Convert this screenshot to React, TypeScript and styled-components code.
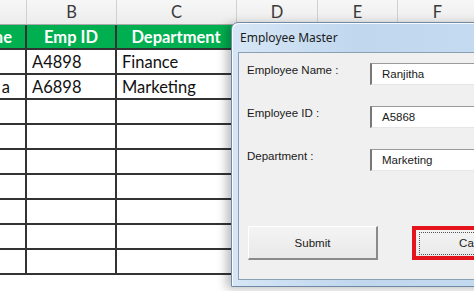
import { Fragment } from "react";
import styled, { createGlobalStyle } from "styled-components";

const GlobalStyle = createGlobalStyle`
    html, body { margin: 0; padding: 0; background: #fff; }
    body { width: 474px; height: 291px; overflow: hidden; }
`;

const Page = styled.div`
    position: relative; width: 474px; height: 291px; overflow: hidden; background: #fff;
`;

// spreadsheet behind the dialog
const Sheet = styled.div`
    display: grid;
    grid-template-columns: 27px 90px 120px 81px 80px 80px;
    grid-auto-rows: 25px;
    font-family: Lato, "Liberation Sans", sans-serif;
`;
const ColHead = styled.div`
    box-sizing: border-box; display: flex; align-items: center; justify-content: center;
    background: linear-gradient(#f7f7f7, #ececec); color: #3a3a3a; font-size: 16.5px;
    border-right: 1px solid #d0d0d0; border-bottom: 1px solid #a9a9a9;
`;
const Cell = styled.div<{ $head?: boolean; $right?: boolean; $plain?: boolean }>`
    box-sizing: border-box; display: flex; align-items: center; overflow: hidden; white-space: nowrap;
    font-size: 16.5px; padding: 0 5px; color: #111;
    border-right: ${p => p.$plain ? "1px solid #dadada" : "2px solid #333"};
    border-bottom: ${p => p.$plain ? "1px solid #dadada" : "2px solid #333"};
    ${p => p.$head && !p.$plain && `background: #00b050; color: #fff; font-weight: 700; justify-content: center;`}
    ${p => p.$right && `justify-content: flex-end; padding-right: 13px;`}
`;

// userform window
const Window = styled.div`
    position: absolute; left: 231px; top: 22px; width: 320px; height: 265px; box-sizing: border-box;
    border: 1px solid #6f8aa6; border-radius: 7px 7px 0 0;
    background: linear-gradient(90deg, #d6e6f6 0%, #c0d7ee 40%, #c6dcf2 100%);
    box-shadow: -5px 2px 10px rgba(0, 0, 0, 0.25), inset 1px 1px 0 rgba(255, 255, 255, 0.85);
    display: flex; flex-direction: column; padding: 0 6px 6px 6px;
`;
const TitleBar = styled.div`
    height: 29px; display: flex; align-items: center; padding-left: 2px;
    font-family: "Noto Sans", "Open Sans", sans-serif; font-size: 12px; color: #1b1b1b;
`;
const Client = styled.div`
    flex: 1; background: #f0f0f0; border: 1px solid #8c9fb3; border-right: 0;
    padding: 10px 0 0 8px; font-family: "Liberation Sans", Arial, sans-serif; font-size: 11.5px; color: #1a1a1a;
`;
const Form = styled.div`
    display: grid; grid-template-columns: 123px 1fr; row-gap: 21px; align-items: start;
`;
const Label = styled.div`
    line-height: 14px;
`;
const TextBox = styled.div`
    height: 22px; box-sizing: border-box; background: #fff; display: flex; align-items: center;
    padding-left: 10px; border-top: 1px solid #9a9a9a; border-left: 2px solid #777;
    border-bottom: 1px solid #e6e6e6;
`;
const ButtonRow = styled.div`
    display: flex; gap: 34px; margin-top: 55px; padding-left: 1px;
`;
const DlgButton = styled.div<{ $marked?: boolean }>`
    position: relative; width: 130px; height: 34px; box-sizing: border-box; flex: none;
    display: flex; align-items: center; justify-content: center;
    background: linear-gradient(#f4f4f4, #e9e9e9);
    border: 1px solid #fff; border-right: 2px solid #8a8a8a; border-bottom: 2px solid #8a8a8a;
    ${p => p.$marked && `
        border: 4px solid #e3141b;
        &::after {
            content: ''; position: absolute; inset: 2px 2px 1px 3px;
            border: 1px dotted #555;
        }
    `}
`;

const rows = [
    { a: "", b: "A4898", c: "Finance" },
    { a: "a", b: "A6898", c: "Marketing" },
    ...Array.from({ length: 7 }, () => ({ a: "", b: "", c: "" })),
];

export default function App() {
    return (
        <Page>
            <GlobalStyle />
            <Sheet>
                <ColHead></ColHead>
                <ColHead>B</ColHead>
                <ColHead>C</ColHead>
                <ColHead>D</ColHead>
                <ColHead>E</ColHead>
                <ColHead>F</ColHead>

                <Cell $head $right>Emp Name</Cell>
                <Cell $head>Emp ID</Cell>
                <Cell $head>Department</Cell>
                <Cell $plain />
                <Cell $plain />
                <Cell $plain />

                {rows.map((r, i) => (
                    <Fragment key={i}>
                        <Cell $right style={{ paddingRight: r.a ? 15 : undefined }}>{r.a}</Cell>
                        <Cell>{r.b}</Cell>
                        <Cell>{r.c}</Cell>
                        <Cell $plain />
                        <Cell $plain />
                        <Cell $plain />
                    </Fragment>
                ))}
            </Sheet>

            <Window>
                <TitleBar>Employee Master</TitleBar>
                <Client>
                    <Form>
                        <Label>Employee Name :</Label>
                        <TextBox>Ranjitha</TextBox>
                        <Label>Employee ID :</Label>
                        <TextBox>A5868</TextBox>
                        <Label>Department :</Label>
                        <TextBox>Marketing</TextBox>
                    </Form>
                    <ButtonRow>
                        <DlgButton>Submit</DlgButton>
                        <DlgButton $marked>Cancel</DlgButton>
                    </ButtonRow>
                </Client>
            </Window>
        </Page>
    );
}
